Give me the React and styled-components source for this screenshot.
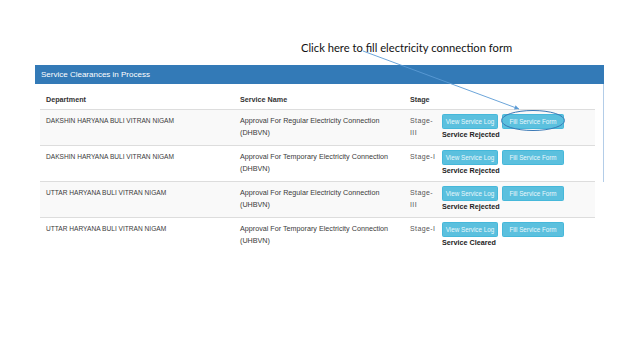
import React from 'react';
import styled, { createGlobalStyle } from 'styled-components';

const GlobalStyle = createGlobalStyle`
  html, body {
    margin: 0;
    padding: 0;
    background: #fff;
  }
  body {
    font-family: "Liberation Sans", Arial, sans-serif;
    color: #333;
  }
`;

const clearances = [
  {
    id: 1,
    department: 'DAKSHIN HARYANA BULI VITRAN NIGAM',
    service: 'Approval For Regular Electricity Connection (DHBVN)',
    stage: 'Stage-III',
    status: 'Service Rejected',
  },
  {
    id: 2,
    department: 'DAKSHIN HARYANA BULI VITRAN NIGAM',
    service: 'Approval For Temporary Electricity Connection (DHBVN)',
    stage: 'Stage-I',
    status: 'Service Rejected',
  },
  {
    id: 3,
    department: 'UTTAR HARYANA BULI VITRAN NIGAM',
    service: 'Approval For Regular Electricity Connection (UHBVN)',
    stage: 'Stage-III',
    status: 'Service Rejected',
  },
  {
    id: 4,
    department: 'UTTAR HARYANA BULI VITRAN NIGAM',
    service: 'Approval For Temporary Electricity Connection (UHBVN)',
    stage: 'Stage-I',
    status: 'Service Cleared',
  },
];

function App() {
  return (
    <Page>
      <GlobalStyle />
      <Callout>Click here to fill electricity connection form</Callout>

      <Panel>
        <PanelHeading>Service Clearances in Process</PanelHeading>
        <PanelBody>
          <Table>
            <colgroup>
              <col style={{ width: 194 }} />
              <col style={{ width: 170 }} />
              <col style={{ width: 32 }} />
              <col />
            </colgroup>
            <thead>
              <tr>
                <Th>Department</Th>
                <Th>Service Name</Th>
                <Th>Stage</Th>
                <Th />
              </tr>
            </thead>
            <tbody>
              {clearances.map((item, i) => (
                <Row key={item.id} $striped={i % 2 === 0}>
                  <Td>{item.department}</Td>
                  <ServiceCell>{item.service}</ServiceCell>
                  <StageCell>{item.stage}</StageCell>
                  <ActionCell>
                    <ButtonGroup>
                      <InfoButton $width={56}>View Service Log</InfoButton>
                      <InfoButton $width={62}>Fill Service Form</InfoButton>
                    </ButtonGroup>
                    <Status>{item.status}</Status>
                  </ActionCell>
                </Row>
              ))}
            </tbody>
          </Table>
        </PanelBody>
      </Panel>

      {/* annotation: arrow from the callout to the first "Fill Service Form" */}
      <Annotation viewBox="0 0 638 359" width="638" height="359">
        <defs>
          <marker id="tip" markerWidth="6" markerHeight="6" refX="5" refY="3" orient="auto">
            <path d="M0,0.5 L5,3 L0,5.5 Z" fill="#5b9bd5" />
          </marker>
        </defs>
        <line x1="363" y1="51" x2="519" y2="109" stroke="#5b9bd5" strokeWidth="0.9" markerEnd="url(#tip)" />
        <ellipse cx="533" cy="120.5" rx="31.5" ry="10" fill="none" stroke="#3a78b5" strokeWidth="1" />
      </Annotation>
    </Page>
  );
}

const Page = styled.div`
  position: relative;
  width: 638px;
  height: 359px;
  padding-top: 40px;
  box-sizing: border-box;
  overflow: hidden;
`;

const Callout = styled.div`
  margin-left: 301px;
  font-family: Lato, "Open Sans", sans-serif;
  font-size: 11.2px;
  line-height: 15px;
  color: #111;
`;

const Panel = styled.section`
  margin: 10px 0 0 35px;
  width: 569px;
`;

const PanelHeading = styled.div`
  height: 19px;
  background: #337ab7;
  color: #fff;
  font-size: 8px;
  line-height: 19px;
  padding-left: 6px;
`;

const PanelBody = styled.div`
  position: relative;
  padding: 4px 9px 0 5px;

  &::after {
    content: '';
    position: absolute;
    top: 0;
    right: 0;
    width: 1px;
    height: 98px;
    background: #b3cde8;
  }
`;

const Table = styled.table`
  width: 555px;
  table-layout: fixed;
  border-collapse: collapse;
  font-size: 6.6px;
  color: #3a3a3a;
`;

const Th = styled.th`
  height: 17px;
  padding: 0 3px 4px 6px;
  text-align: left;
  vertical-align: bottom;
  font-size: 7.2px;
  line-height: 10px;
  font-weight: bold;
  color: #333;
`;

const Row = styled.tr`
  height: 36px;
  border-top: 1px solid #dddddd;
  background: ${(p) => (p.$striped ? '#f9f9f9' : '#ffffff')};
`;

const Td = styled.td`
  padding: 5px 3px 0 6px;
  vertical-align: top;
  line-height: 11.5px;
  box-sizing: border-box;
`;

const ServiceCell = styled(Td)`
  font-size: 7.2px;
  padding-right: 8px;
`;

const StageCell = styled(Td)`
  font-size: 7px;
  letter-spacing: 0.4px;
  padding-right: 0;
  color: #555;
`;

const ActionCell = styled(Td)`
  padding-top: 4px;
  padding-left: 6px;
`;

const ButtonGroup = styled.div`
  display: flex;
  gap: 4px;
`;

const InfoButton = styled.button`
  width: ${(p) => p.$width}px;
  height: 15px;
  padding: 0;
  border: 1px solid #46b8da;
  border-radius: 1.5px;
  background: #5bc0de;
  color: #eaf7fb;
  font-family: "Liberation Sans", Arial, sans-serif;
  font-size: 6.3px;
  line-height: 13px;
  cursor: pointer;
`;

const Status = styled.div`
  margin-top: 1px;
  font-size: 7.2px;
  line-height: 10px;
  font-weight: bold;
  color: #222;
`;

const Annotation = styled.svg`
  position: absolute;
  top: 0;
  left: 0;
  pointer-events: none;
`;

export default App;
